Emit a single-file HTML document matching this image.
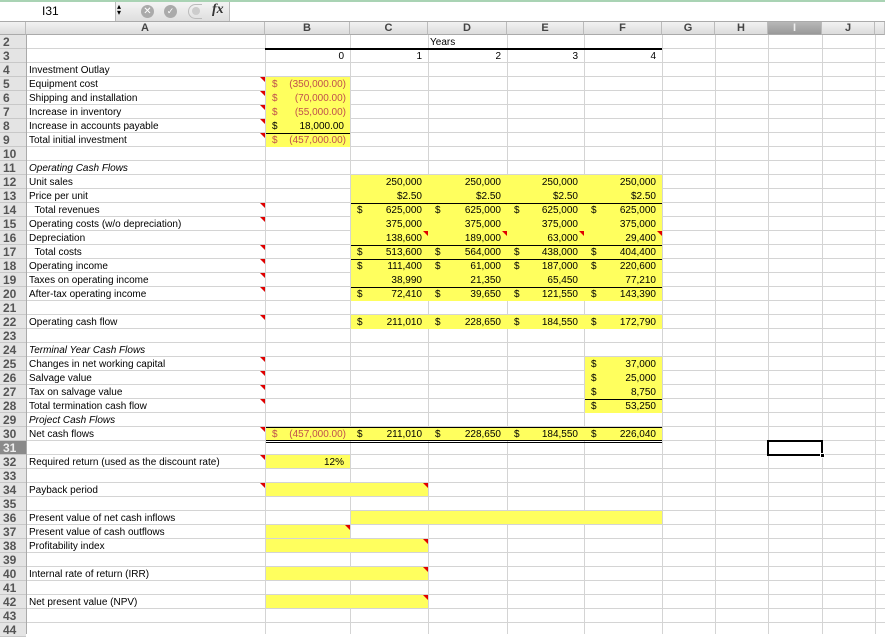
<!DOCTYPE html>
<html><head><meta charset="utf-8"><style>
*{margin:0;padding:0;box-sizing:border-box}
body{width:885px;height:634px;overflow:hidden;background:#fff;font-family:"Liberation Sans",sans-serif;font-size:10px;color:#000;position:relative}
div{position:absolute}
.c{height:14px;line-height:16px;white-space:nowrap}
.t{padding-left:3px}
.y{background:#ffff5e}
.m{display:flex;justify-content:space-between;padding:0 6px 0 7px}
.n{text-align:right;padding-right:6px}
.red{color:#c0504d}
.rh{left:0;width:26px;height:14px;line-height:15px;background:#e4e4e4;border-bottom:1px solid #c8c8c8;color:#555;font-size:12px;padding-left:3px;font-weight:bold}
.ch{top:22px;height:13px;line-height:13px;background:linear-gradient(#f2f2f2,#dcdcdc);border-right:1px solid #bbb;border-bottom:1px solid #aaa;text-align:center;color:#444;font-size:11px;font-weight:bold}
.v{top:35px;height:599px;width:1px;background:#d4d4d4}
.tri{width:0;height:0;border-top:5px solid #e00000;border-left:5px solid transparent}
.bt{border-top:1px solid #000}
</style></head><body>
<!-- toolbar -->
<div style="left:0;top:0;width:885px;height:2px;background:#a9d3b4"></div>
<div style="left:0;top:2px;width:885px;height:20px;background:#fff;border-bottom:1px solid #aaa"></div>
<div style="left:42px;top:4px;font-size:12px">I31</div>
<div style="left:115px;top:2px;width:115px;height:19px;background:linear-gradient(#f4f4f4,#dedede);border-left:1px solid #bbb;border-right:1px solid #bbb"></div>
<div style="left:117px;top:4px;font-size:8px;line-height:6px">▴<br>▾</div>
<div style="left:141px;top:5px;width:13px;height:13px;border-radius:50%;background:#aaa;color:#fff;font-size:10px;line-height:13px;text-align:center">✕</div>
<div style="left:164px;top:5px;width:13px;height:13px;border-radius:50%;background:#aaa;color:#fff;font-size:9px;line-height:13px;text-align:center">✓</div>
<div style="left:188px;top:4px;width:14px;height:15px;border:1px solid #bbb;border-radius:8px 0 0 8px;border-right:none"></div>
<div style="left:192px;top:7px;width:8px;height:8px;border-radius:50%;background:#ccc"></div>
<div style="left:212px;top:2px;font-family:'Liberation Serif',serif;font-style:italic;font-weight:bold;font-size:14px;color:#333">fx</div>
<!-- column headers -->
<div class="ch" style="left:0;width:26px;background:linear-gradient(#f2f2f2,#dcdcdc)"></div>
<div class="ch" style="left:26px;width:239px">A</div>
<div class="ch" style="left:265px;width:85px">B</div>
<div class="ch" style="left:350px;width:78px">C</div>
<div class="ch" style="left:428px;width:79px">D</div>
<div class="ch" style="left:507px;width:77px">E</div>
<div class="ch" style="left:584px;width:78px">F</div>
<div class="ch" style="left:662px;width:53px">G</div>
<div class="ch" style="left:715px;width:53px">H</div>
<div class="ch" style="left:768px;width:54px;background:linear-gradient(#b8b8b8,#999);color:#eee">I</div>
<div class="ch" style="left:822px;width:53px">J</div>
<div class="ch" style="left:875px;width:10px"></div>
<!-- grid -->
<div style="left:26px;top:35px;width:859px;height:599px;background:repeating-linear-gradient(to bottom,transparent 0,transparent 13px,#d4d4d4 13px,#d4d4d4 14px)"></div>
<div class="v" style="left:26px;background:#aaa"></div>
<div class="v" style="left:265px"></div><div class="v" style="left:350px"></div><div class="v" style="left:428px"></div><div class="v" style="left:507px"></div><div class="v" style="left:584px"></div><div class="v" style="left:662px"></div><div class="v" style="left:715px"></div><div class="v" style="left:768px"></div><div class="v" style="left:822px"></div><div class="v" style="left:875px"></div>
<!-- row headers -->
<div class="rh" style="top:35px">2</div><div class="rh" style="top:49px">3</div><div class="rh" style="top:63px">4</div><div class="rh" style="top:77px">5</div><div class="rh" style="top:91px">6</div><div class="rh" style="top:105px">7</div><div class="rh" style="top:119px">8</div><div class="rh" style="top:133px">9</div><div class="rh" style="top:147px">10</div><div class="rh" style="top:161px">11</div><div class="rh" style="top:175px">12</div><div class="rh" style="top:189px">13</div><div class="rh" style="top:203px">14</div><div class="rh" style="top:217px">15</div><div class="rh" style="top:231px">16</div><div class="rh" style="top:245px">17</div><div class="rh" style="top:259px">18</div><div class="rh" style="top:273px">19</div><div class="rh" style="top:287px">20</div><div class="rh" style="top:301px">21</div><div class="rh" style="top:315px">22</div><div class="rh" style="top:329px">23</div><div class="rh" style="top:343px">24</div><div class="rh" style="top:357px">25</div><div class="rh" style="top:371px">26</div><div class="rh" style="top:385px">27</div><div class="rh" style="top:399px">28</div><div class="rh" style="top:413px">29</div><div class="rh" style="top:427px">30</div><div class="rh" style="top:441px;background:#8a8a8a;color:#eee">31</div><div class="rh" style="top:455px">32</div><div class="rh" style="top:469px">33</div><div class="rh" style="top:483px">34</div><div class="rh" style="top:497px">35</div><div class="rh" style="top:511px">36</div><div class="rh" style="top:525px">37</div><div class="rh" style="top:539px">38</div><div class="rh" style="top:553px">39</div><div class="rh" style="top:567px">40</div><div class="rh" style="top:581px">41</div><div class="rh" style="top:595px">42</div><div class="rh" style="top:609px">43</div><div class="rh" style="top:623px">44</div>
<!-- yellow fills -->
<div class="y" style="left:266px;top:77px;width:84px;height:70px"></div>
<div class="y" style="left:351px;top:175px;width:311px;height:126px"></div>
<div class="y" style="left:351px;top:315px;width:311px;height:14px"></div>
<div class="y" style="left:585px;top:357px;width:77px;height:56px"></div>
<div class="y" style="left:266px;top:427px;width:396px;height:14px"></div>
<div class="y" style="left:266px;top:455px;width:84px;height:13px"></div>
<div class="y" style="left:266px;top:483px;width:162px;height:13px"></div>
<div class="y" style="left:351px;top:511px;width:311px;height:13px"></div>
<div class="y" style="left:266px;top:525px;width:84px;height:13px"></div>
<div class="y" style="left:266px;top:539px;width:162px;height:13px"></div>
<div class="y" style="left:266px;top:567px;width:162px;height:13px"></div>
<div class="y" style="left:266px;top:595px;width:162px;height:13px"></div>
<!-- borders -->
<div style="left:265px;top:48px;width:397px;height:2px;background:#000"></div>
<div class="bt" style="left:266px;top:133px;width:84px"></div>
<div class="bt" style="left:351px;top:203px;width:311px"></div>
<div class="bt" style="left:351px;top:245px;width:311px"></div>
<div class="bt" style="left:351px;top:259px;width:311px"></div>
<div class="bt" style="left:351px;top:287px;width:311px"></div>
<div class="bt" style="left:585px;top:399px;width:77px"></div>
<div class="bt" style="left:266px;top:427px;width:396px"></div>
<div style="left:266px;top:440px;width:396px;height:3px;border-top:1px solid #000;border-bottom:1px solid #000"></div>
<!-- column A labels -->
<div class="c t" style="left:26px;top:63px">Investment Outlay</div>
<div class="c t" style="left:26px;top:77px">Equipment cost</div>
<div class="c t" style="left:26px;top:91px">Shipping and installation</div>
<div class="c t" style="left:26px;top:105px">Increase in inventory</div>
<div class="c t" style="left:26px;top:119px">Increase in accounts payable</div>
<div class="c t" style="left:26px;top:133px">Total initial investment</div>
<div class="c t" style="left:26px;top:161px;font-style:italic">Operating Cash Flows</div>
<div class="c t" style="left:26px;top:175px">Unit sales</div>
<div class="c t" style="left:26px;top:189px">Price per unit</div>
<div class="c t" style="left:26px;top:203px">&nbsp;&nbsp;Total revenues</div>
<div class="c t" style="left:26px;top:217px">Operating costs (w/o depreciation)</div>
<div class="c t" style="left:26px;top:231px">Depreciation</div>
<div class="c t" style="left:26px;top:245px">&nbsp;&nbsp;Total costs</div>
<div class="c t" style="left:26px;top:259px">Operating income</div>
<div class="c t" style="left:26px;top:273px">Taxes on operating income</div>
<div class="c t" style="left:26px;top:287px">After-tax operating income</div>
<div class="c t" style="left:26px;top:315px">Operating cash flow</div>
<div class="c t" style="left:26px;top:343px;font-style:italic">Terminal Year Cash Flows</div>
<div class="c t" style="left:26px;top:357px">Changes in net working capital</div>
<div class="c t" style="left:26px;top:371px">Salvage value</div>
<div class="c t" style="left:26px;top:385px">Tax on salvage value</div>
<div class="c t" style="left:26px;top:399px">Total termination cash flow</div>
<div class="c t" style="left:26px;top:413px;font-style:italic">Project Cash Flows</div>
<div class="c t" style="left:26px;top:427px">Net cash flows</div>
<div class="c t" style="left:26px;top:455px">Required return (used as the discount rate)</div>
<div class="c t" style="left:26px;top:483px">Payback period</div>
<div class="c t" style="left:26px;top:511px">Present value of net cash inflows</div>
<div class="c t" style="left:26px;top:525px">Present value of cash outflows</div>
<div class="c t" style="left:26px;top:539px">Profitability index</div>
<div class="c t" style="left:26px;top:567px">Internal rate of return (IRR)</div>
<div class="c t" style="left:26px;top:595px">Net present value (NPV)</div>
<!-- years header -->
<div class="c" style="left:430px;top:35px">Years</div>
<div class="c n" style="left:265px;top:49px;width:85px">0</div>
<div class="c n" style="left:350px;top:49px;width:78px">1</div>
<div class="c n" style="left:428px;top:49px;width:79px">2</div>
<div class="c n" style="left:507px;top:49px;width:77px">3</div>
<div class="c n" style="left:584px;top:49px;width:78px">4</div>
<!-- B column -->
<div class="c m red" style="left:265px;top:77px;width:85px;padding-right:4px"><span>$</span><span>(350,000.00)</span></div>
<div class="c m red" style="left:265px;top:91px;width:85px;padding-right:4px"><span>$</span><span>(70,000.00)</span></div>
<div class="c m red" style="left:265px;top:105px;width:85px;padding-right:4px"><span>$</span><span>(55,000.00)</span></div>
<div class="c m" style="left:265px;top:119px;width:85px;padding-right:6px"><span>$</span><span>18,000.00</span></div>
<div class="c m red" style="left:265px;top:133px;width:85px;padding-right:4px"><span>$</span><span>(457,000.00)</span></div>
<div class="c m red" style="left:265px;top:427px;width:85px;padding-right:4px"><span>$</span><span>(457,000.00)</span></div>
<div class="c n" style="left:265px;top:455px;width:85px">12%</div>
<!-- C-F rows -->
<div class="c n" style="left:350px;top:175px;width:78px">250,000</div><div class="c n" style="left:428px;top:175px;width:79px">250,000</div><div class="c n" style="left:507px;top:175px;width:77px">250,000</div><div class="c n" style="left:584px;top:175px;width:78px">250,000</div>
<div class="c n" style="left:350px;top:189px;width:78px">$2.50</div><div class="c n" style="left:428px;top:189px;width:79px">$2.50</div><div class="c n" style="left:507px;top:189px;width:77px">$2.50</div><div class="c n" style="left:584px;top:189px;width:78px">$2.50</div>
<div class="c m" style="left:350px;top:203px;width:78px"><span>$</span><span>625,000</span></div><div class="c m" style="left:428px;top:203px;width:79px"><span>$</span><span>625,000</span></div><div class="c m" style="left:507px;top:203px;width:77px"><span>$</span><span>625,000</span></div><div class="c m" style="left:584px;top:203px;width:78px"><span>$</span><span>625,000</span></div>
<div class="c n" style="left:350px;top:217px;width:78px">375,000</div><div class="c n" style="left:428px;top:217px;width:79px">375,000</div><div class="c n" style="left:507px;top:217px;width:77px">375,000</div><div class="c n" style="left:584px;top:217px;width:78px">375,000</div>
<div class="c n" style="left:350px;top:231px;width:78px">138,600</div><div class="c n" style="left:428px;top:231px;width:79px">189,000</div><div class="c n" style="left:507px;top:231px;width:77px">63,000</div><div class="c n" style="left:584px;top:231px;width:78px">29,400</div>
<div class="c m" style="left:350px;top:245px;width:78px"><span>$</span><span>513,600</span></div><div class="c m" style="left:428px;top:245px;width:79px"><span>$</span><span>564,000</span></div><div class="c m" style="left:507px;top:245px;width:77px"><span>$</span><span>438,000</span></div><div class="c m" style="left:584px;top:245px;width:78px"><span>$</span><span>404,400</span></div>
<div class="c m" style="left:350px;top:259px;width:78px"><span>$</span><span>111,400</span></div><div class="c m" style="left:428px;top:259px;width:79px"><span>$</span><span>61,000</span></div><div class="c m" style="left:507px;top:259px;width:77px"><span>$</span><span>187,000</span></div><div class="c m" style="left:584px;top:259px;width:78px"><span>$</span><span>220,600</span></div>
<div class="c n" style="left:350px;top:273px;width:78px">38,990</div><div class="c n" style="left:428px;top:273px;width:79px">21,350</div><div class="c n" style="left:507px;top:273px;width:77px">65,450</div><div class="c n" style="left:584px;top:273px;width:78px">77,210</div>
<div class="c m" style="left:350px;top:287px;width:78px"><span>$</span><span>72,410</span></div><div class="c m" style="left:428px;top:287px;width:79px"><span>$</span><span>39,650</span></div><div class="c m" style="left:507px;top:287px;width:77px"><span>$</span><span>121,550</span></div><div class="c m" style="left:584px;top:287px;width:78px"><span>$</span><span>143,390</span></div>
<div class="c m" style="left:350px;top:315px;width:78px"><span>$</span><span>211,010</span></div><div class="c m" style="left:428px;top:315px;width:79px"><span>$</span><span>228,650</span></div><div class="c m" style="left:507px;top:315px;width:77px"><span>$</span><span>184,550</span></div><div class="c m" style="left:584px;top:315px;width:78px"><span>$</span><span>172,790</span></div>
<div class="c m" style="left:584px;top:357px;width:78px"><span>$</span><span>37,000</span></div>
<div class="c m" style="left:584px;top:371px;width:78px"><span>$</span><span>25,000</span></div>
<div class="c m" style="left:584px;top:385px;width:78px"><span>$</span><span>8,750</span></div>
<div class="c m" style="left:584px;top:399px;width:78px"><span>$</span><span>53,250</span></div>
<div class="c m" style="left:350px;top:427px;width:78px"><span>$</span><span>211,010</span></div><div class="c m" style="left:428px;top:427px;width:79px"><span>$</span><span>228,650</span></div><div class="c m" style="left:507px;top:427px;width:77px"><span>$</span><span>184,550</span></div><div class="c m" style="left:584px;top:427px;width:78px"><span>$</span><span>226,040</span></div>
<!-- red triangles -->
<div class="tri" style="left:260px;top:77px"></div><div class="tri" style="left:260px;top:91px"></div><div class="tri" style="left:260px;top:105px"></div><div class="tri" style="left:260px;top:119px"></div><div class="tri" style="left:260px;top:133px"></div>
<div class="tri" style="left:260px;top:203px"></div><div class="tri" style="left:260px;top:217px"></div><div class="tri" style="left:260px;top:245px"></div><div class="tri" style="left:260px;top:259px"></div><div class="tri" style="left:260px;top:273px"></div><div class="tri" style="left:260px;top:287px"></div><div class="tri" style="left:260px;top:315px"></div>
<div class="tri" style="left:260px;top:357px"></div><div class="tri" style="left:260px;top:371px"></div><div class="tri" style="left:260px;top:385px"></div><div class="tri" style="left:260px;top:399px"></div><div class="tri" style="left:260px;top:427px"></div><div class="tri" style="left:260px;top:455px"></div><div class="tri" style="left:260px;top:483px"></div>
<div class="tri" style="left:423px;top:231px"></div><div class="tri" style="left:502px;top:231px"></div><div class="tri" style="left:579px;top:231px"></div><div class="tri" style="left:657px;top:231px"></div>
<div class="tri" style="left:423px;top:483px"></div><div class="tri" style="left:345px;top:525px"></div><div class="tri" style="left:423px;top:539px"></div><div class="tri" style="left:423px;top:567px"></div><div class="tri" style="left:423px;top:595px"></div>
<!-- selected cell -->
<div style="left:767px;top:440px;width:56px;height:16px;border:2px solid #000"></div>
<div style="left:820px;top:453px;width:5px;height:5px;background:#000;border:1px solid #fff"></div>
</body></html>
